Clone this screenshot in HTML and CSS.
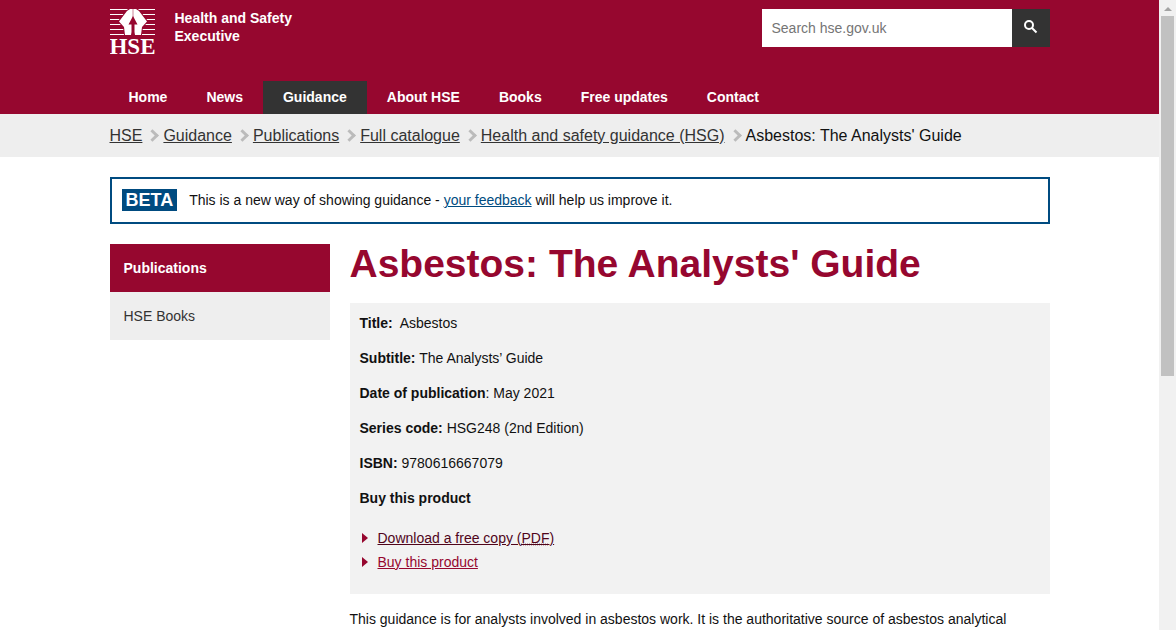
FILE: index.html
```html
<!DOCTYPE html>
<html lang="en">
<head>
    <meta charset="UTF-8">
    <meta name="viewport" content="width=device-width, initial-scale=1.0">
    <title>Asbestos: The Analysts' Guide - HSG248</title>
    <link rel="stylesheet" href="styles.css">
</head>
<body>

<div class="page">
    <header class="header">
        <div class="container">
            <div class="header-top">
                <a class="brand" href="#">
                    <svg class="logo" viewBox="0 0 45 52" width="45" height="52" aria-hidden="true">
                        <path d="M0 .5H45M0 5.500H45M0 10.500H45M0 15.500H45M0 20.500H45M0 25.500H45" stroke="#fff" stroke-width="1"/>
                        <path class="hands" d="M22.500 0H20L17 2L9 12.500L14 18L15 26H31L32 18L37 12.500L29 2L26 0Z"/>
                        <path class="gap" d="M23 7L27.500 15.500H24.500V23L25 26H21L21.500 23V15.500H18.500Z"/>
                        <path d="M23 0V9" stroke="#96072f" stroke-width=".5"/>
                        <text x="22.500" y="45" text-anchor="middle">HSE</text>
                    </svg>
                    <span>Health and Safety<br>Executive</span>
                </a>
                <form class="search" role="search">
                    <input type="text" placeholder="Search hse.gov.uk" aria-label="Search hse.gov.uk">
                    <button type="button" aria-label="Search">
                        <svg viewBox="0 0 14 14" width="14" height="14" fill="none" stroke="#fff" stroke-width="2">
                            <circle cx="5" cy="5" r="4"/>
                            <path d="M8 8L12.500 12.500"/>
                        </svg>
                    </button>
                </form>
            </div>
            <nav class="nav">
                <a href="#">Home</a>
                <a href="#">News</a>
                <a href="#" class="active">Guidance</a>
                <a href="#">About HSE</a>
                <a href="#">Books</a>
                <a href="#">Free updates</a>
                <a href="#">Contact</a>
            </nav>
        </div>
    </header>

    <div class="breadcrumb">
        <ol class="container">
            <li><a href="#">HSE</a></li>
            <li><a href="#">Guidance</a></li>
            <li><a href="#">Publications</a></li>
            <li><a href="#">Full catalogue</a></li>
            <li><a href="#">Health and safety guidance (HSG)</a></li>
            <li>Asbestos: The Analysts' Guide</li>
        </ol>
    </div>

    <div class="container">
        <div class="beta">
            <strong>BETA</strong>
            <span>This is a new way of showing guidance - <a href="#">your feedback</a> will help us improve it.</span>
        </div>

        <div class="columns">
            <nav class="sidebar">
                <a href="#" class="current">Publications</a>
                <a href="#">HSE Books</a>
            </nav>
            <main class="content">
                <h1>Asbestos: The Analysts' Guide</h1>
                <div class="details">
                    <p><b>Title:</b>&nbsp; Asbestos</p>
                    <p><b>Subtitle:</b> The Analysts’ Guide</p>
                    <p><b>Date of publication</b>: May 2021</p>
                    <p><b>Series code:</b> HSG248 (2nd Edition)</p>
                    <p><b>ISBN:</b> 9780616667079</p>
                    <p><b>Buy this product</b></p>
                    <ul>
                        <li><a href="#" class="hovered">Download a free copy (<abbr title="Portable Document Format">PDF</abbr>)</a></li>
                        <li><a href="#">Buy this product</a></li>
                    </ul>
                </div>
                <p>This guidance is for analysts involved in asbestos work. It is the authoritative source of asbestos analytical</p>
            </main>
        </div>
    </div>
</div>

<div class="scrollbar" aria-hidden="true">
    <div class="scroll-arrow"></div>
    <div class="scroll-thumb"></div>
</div>

</body>
</html>
```
FILE: styles.css
```css
*, *::before {
    box-sizing: border-box;
}
body {
    margin: 0;
    display: flex;
    height: 100vh;
    overflow: hidden;
    background: #fff;
    color: #111;
    font-family: Arial, "Liberation Sans", sans-serif;
    font-size: 14px;
    line-height: 20px;
}
.page {
    flex: 1;
    min-width: 0;
}
.container {
    max-width: 940px;
    margin: 0 auto;
}

/* Header */
.header {
    background: #96072f;
}
.header-top {
    display: flex;
    justify-content: space-between;
    align-items: flex-start;
    padding-top: 9px;
    height: 81px;
}
.brand {
    display: flex;
    gap: 20px;
    color: #fff;
    font-weight: bold;
    line-height: 18px;
    text-decoration: none;
}
.logo text {
    font-family: "Liberation Serif", serif;
    font-size: 23px;
    font-weight: bold;
    fill: #fff;
}
.hands {
    fill: #fff;
    stroke: #96072f;
    stroke-width: 2;
    paint-order: stroke;
}
.gap {
    fill: #96072f;
}
.search {
    display: flex;
    height: 38px;
}
.search input {
    width: 250px;
    padding: 0 10px;
    border: 0;
    border-radius: 0;
    background: #fff;
    font-family: inherit;
    font-size: 14px;
}
.search input::placeholder {
    color: #757575;
}
.search button {
    width: 38px;
    padding: 0;
    border: 0;
    background: #333;
    cursor: pointer;
}
.nav {
    display: flex;
    gap: 1px;
}
.nav a {
    padding: 6px 19px 7px;
    color: #fff;
    font-weight: bold;
    text-decoration: none;
}
.nav a.active {
    padding: 6px 20px 7px;
    background: #333;
}

/* Breadcrumb */
.breadcrumb {
    background: #eee;
    padding: 12px 0 11px;
}
.breadcrumb ol {
    display: flex;
    padding: 0;
    list-style: none;
    font-size: 16px;
}
.breadcrumb li {
    display: flex;
    align-items: center;
}
.breadcrumb li + li::before {
    content: "";
    width: 9px;
    height: 9px;
    margin: 0 6px 2px;
    border: solid #bbb;
    border-width: 3px 3px 0 0;
    transform: rotate(45deg);
}
.breadcrumb a {
    color: #333;
}

/* Beta banner */
.beta {
    display: flex;
    align-items: center;
    gap: 12px;
    margin: 20px 0;
    padding: 10px 10px 11px;
    border: 2px solid #004b80;
}
.beta strong {
    padding: 1px 4px;
    background: #004b80;
    color: #fff;
    font-size: 18px;
}
.beta a {
    color: #004b80;
}

/* Columns */
.columns {
    display: flex;
    align-items: flex-start;
    gap: 20px;
}
.sidebar {
    width: 220px;
}
.sidebar a {
    display: block;
    padding: 14px;
    background: #eee;
    color: #333;
    text-decoration: none;
}
.sidebar a.current {
    background: #96072f;
    color: #fff;
    font-weight: bold;
}
.content {
    flex: 1;
    min-width: 0;
}
h1 {
    margin: 0 0 19px;
    color: #96072f;
    font-size: 39px;
    line-height: 40px;
}
.details {
    margin-bottom: 15px;
    padding: 10px 10px 20px;
    background: #f2f2f2;
}
.content p {
    margin: 0;
}
.details p {
    margin-bottom: 15px;
}
.details ul {
    margin: 0;
    padding: 3px 0 0;
    list-style: none;
}
.details li {
    display: flex;
    align-items: center;
    line-height: 24px;
}
.details li::before {
    content: "";
    margin: 0 10px 0 2px;
    border: solid transparent;
    border-width: 5px 0 5px 6px;
    border-left-color: #96072f;
}
.details a {
    color: #96072f;
}
.details a.hovered {
    color: #50051b;
}
abbr {
    text-decoration: underline dotted;
}

/* Scrollbar */
.scrollbar {
    width: 17px;
    padding: 7px 2px 0;
    background: #f1f1f1;
}
.scroll-arrow {
    width: 8px;
    margin: 0 auto 5px;
    border: solid transparent;
    border-width: 0 4px 4px;
    border-bottom-color: #a3a3a3;
}
.scroll-thumb {
    height: 360px;
    background: #c1c1c1;
}
```
